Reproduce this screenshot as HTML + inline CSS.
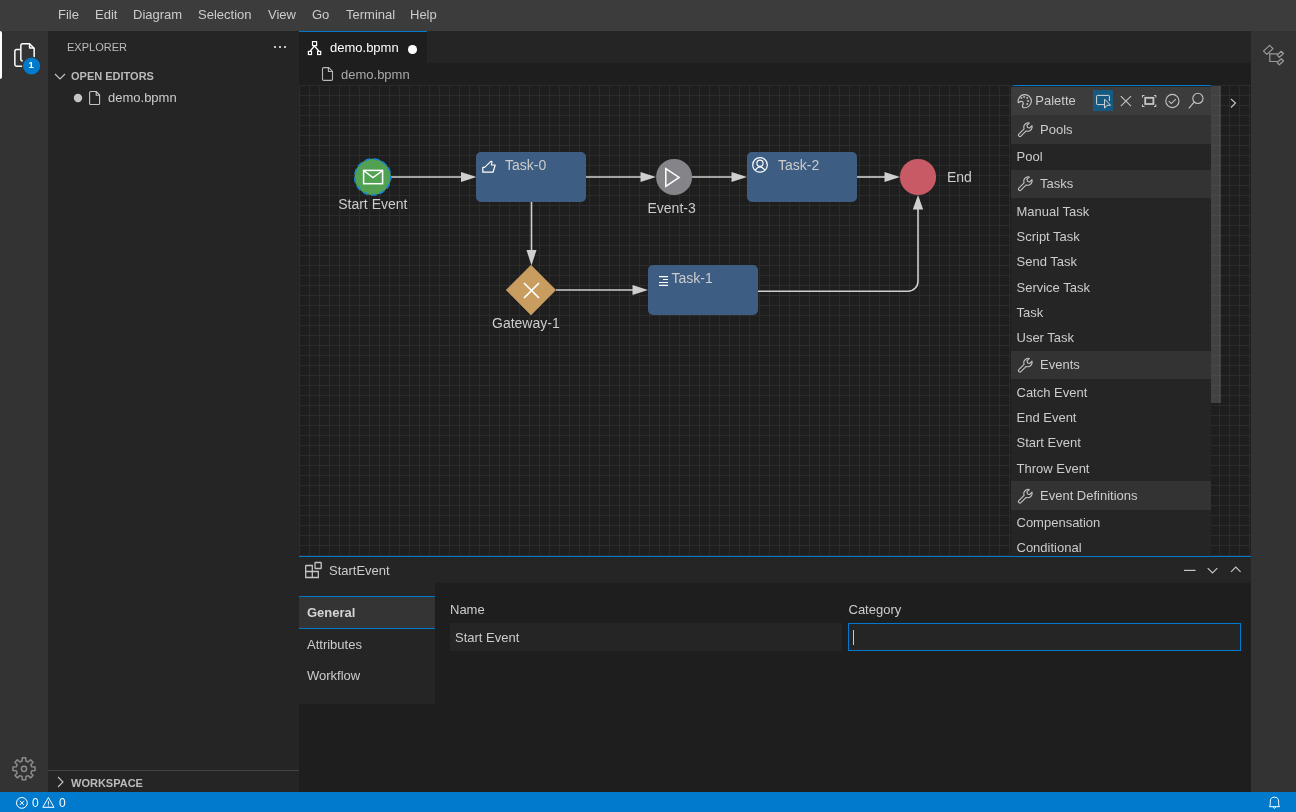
<!DOCTYPE html>
<html><head><meta charset="utf-8">
<style>
*{margin:0;padding:0;box-sizing:border-box}
html,body{-webkit-font-smoothing:antialiased;width:1296px;height:812px;overflow:hidden;background:#1e1e1e;font-family:"Liberation Sans",sans-serif;color:#cccccc}
.a{position:absolute}
.t{position:absolute;line-height:1;white-space:nowrap}
svg{position:absolute;overflow:visible}
#root{position:absolute;left:0;top:0;width:1296px;height:812px;will-change:transform}
</style></head><body><div id="root">
<!-- menubar -->
<div class="a" style="left:0;top:0;width:1296px;height:31px;background:#3c3c3c"></div>
<div class="t" style="left:58px;top:8px;font-size:13px;color:#cccccc">File</div>
<div class="t" style="left:95px;top:8px;font-size:13px;color:#cccccc">Edit</div>
<div class="t" style="left:133px;top:8px;font-size:13px;color:#cccccc">Diagram</div>
<div class="t" style="left:198px;top:8px;font-size:13px;color:#cccccc">Selection</div>
<div class="t" style="left:268px;top:8px;font-size:13px;color:#cccccc">View</div>
<div class="t" style="left:312px;top:8px;font-size:13px;color:#cccccc">Go</div>
<div class="t" style="left:346px;top:8px;font-size:13px;color:#cccccc">Terminal</div>
<div class="t" style="left:410px;top:8px;font-size:13px;color:#cccccc">Help</div>

<!-- activity bar -->
<div class="a" style="left:0;top:31px;width:48px;height:761px;background:#333333"></div>
<div class="a" style="left:0;top:31px;width:2px;height:48px;background:#ffffff;border-radius:0 2px 2px 0"></div>

<!-- sidebar -->
<div class="a" style="left:48px;top:31px;width:251px;height:761px;background:#252526"></div>
<div class="t" style="left:67px;top:42px;font-size:11px;color:#bbbbbb">EXPLORER</div>
<div class="t" style="left:71px;top:71px;font-size:11px;font-weight:bold;color:#bbbbbb">OPEN EDITORS</div>
<div class="t" style="left:108px;top:91px;font-size:13px;color:#cccccc">demo.bpmn</div>
<div class="a" style="left:48px;top:770px;width:251px;height:1px;background:#444444"></div>
<div class="t" style="left:71px;top:777.5px;font-size:11px;font-weight:bold;color:#bbbbbb">WORKSPACE</div>

<!-- editor tabs -->
<div class="a" style="left:299px;top:31px;width:952px;height:32px;background:#252526"></div>
<div class="a" style="left:299px;top:31px;width:128px;height:32px;background:#1e1e1e;border-top:1px solid #007acc"></div>
<div class="t" style="left:330px;top:41px;font-size:13px;color:#ffffff">demo.bpmn</div>
<div class="a" style="left:408.4px;top:45px;width:8.6px;height:8.6px;border-radius:50%;background:#ffffff"></div>
<div class="t" style="left:341px;top:68px;font-size:13px;color:#a9a9a9">demo.bpmn</div>

<!-- canvas -->
<div class="a" style="left:299px;top:85px;width:952px;height:471px;background-color:#1e1e1e;background-image:linear-gradient(to right,#2b2b2b 1px,transparent 1px),linear-gradient(to bottom,#2b2b2b 1px,transparent 1px);background-size:10px 10px"></div>

<!-- panel -->
<div class="a" style="left:299px;top:556px;width:952px;height:1px;background:#007acc"></div>
<div class="a" style="left:299px;top:557px;width:952px;height:26px;background:#252526"></div>
<div class="t" style="left:329px;top:564px;font-size:13px;color:#cccccc">StartEvent</div>
<div class="a" style="left:299px;top:583px;width:136px;height:121px;background:#252526"></div>
<div class="a" style="left:299px;top:596px;width:136px;height:33px;background:#343434;border-top:1px solid #007acc;border-bottom:1px solid #007acc"></div>
<div class="t" style="left:307px;top:606px;font-size:13px;font-weight:bold;color:#d4d4d4">General</div>
<div class="t" style="left:307px;top:638px;font-size:13px;color:#cccccc">Attributes</div>
<div class="t" style="left:307px;top:669px;font-size:13px;color:#cccccc">Workflow</div>
<div class="t" style="left:450px;top:603px;font-size:13px;color:#cccccc">Name</div>
<div class="a" style="left:450px;top:623px;width:392px;height:28px;background:#252526"></div>
<div class="t" style="left:455px;top:631px;font-size:13px;color:#cccccc">Start Event</div>
<div class="t" style="left:848.5px;top:603px;font-size:13px;color:#cccccc">Category</div>
<div class="a" style="left:848px;top:623px;width:393px;height:28px;background:#252526;border:1px solid #007acc"></div>
<div class="a" style="left:853px;top:630px;width:1px;height:15px;background:#cccccc"></div>

<!-- right bar -->
<div class="a" style="left:1251px;top:31px;width:45px;height:761px;background:#333333"></div>

<!-- status bar -->
<div class="a" style="left:0;top:792px;width:1296px;height:20px;background:#007acc"></div>
<div class="t" style="left:32px;top:797px;font-size:12px;color:#ffffff">0</div>
<div class="t" style="left:59px;top:797px;font-size:12px;color:#ffffff">0</div>

<svg width="1296" height="812" style="left:0;top:0" viewBox="0 0 1296 812">
<g fill="none" stroke="#cfcfcf" stroke-width="1.6">
<path d="M391,177 H462"/><path d="M586,177 H641"/><path d="M692,177 H732"/><path d="M857,177 H885"/>
<path d="M531.5,202 V251"/><path d="M556,290 H633"/>
<path d="M758,291.2 H908 A10,10 0 0 0 918,281.2 V209"/>
</g>
<g fill="#cfcfcf">
<path d="M461,172 L476.5,177 L461,182 Z"/>
<path d="M640.5,172 L656,177 L640.5,182 Z"/>
<path d="M731.5,172 L747,177 L731.5,182 Z"/>
<path d="M884.5,172 L900,177 L884.5,182 Z"/>
<path d="M526.5,250 L531.5,265.5 L536.5,250 Z"/>
<path d="M632.5,285 L648,290 L632.5,295 Z"/>
<path d="M912.8,209.5 L918,195 L923.2,209.5 Z"/>
</g>
<!-- start event -->
<circle cx="372.7" cy="177" r="18.2" fill="#52a152"/>
<circle cx="372.7" cy="177" r="18" fill="none" stroke="#1784d4" stroke-width="1.7" stroke-dasharray="5.6 3.1" stroke-dashoffset="2"/>
<g fill="none" stroke="#ffffff" stroke-width="1.5">
<rect x="363.6" y="170.4" width="19" height="13.3"/>
<path d="M364.2,171 L373,177.6 L382,171"/>
</g>
<text x="338.2" y="208.8" font-size="14" fill="#cccccc">Start Event</text>
<!-- task0 -->
<rect x="476" y="152" width="110" height="50" rx="5" fill="#3d5d82"/>
<path d="M482.8,172.2 V167.4 H484.6 L490.6,161.6 Q491.8,160.8 492,162 L491.4,165 H495.2 L493,172.2 Z" fill="none" stroke="#ffffff" stroke-width="1.2" stroke-linejoin="round"/>
<text x="505" y="170" font-size="14" fill="#cccccc">Task-0</text>
<!-- event3 -->
<circle cx="674.1" cy="177" r="18" fill="#858589"/>
<path d="M665.8,168.7 L679.1,177.4 L665.8,186.3 Z" fill="none" stroke="#ffffff" stroke-width="1.5" stroke-linejoin="miter"/>
<text x="647.5" y="212.8" font-size="14" fill="#cccccc">Event-3</text>
<!-- task2 -->
<rect x="747" y="152" width="110" height="50" rx="5" fill="#3d5d82"/>
<g fill="none" stroke="#ffffff" stroke-width="1.2">
<circle cx="760" cy="164.9" r="7.3"/>
<circle cx="760" cy="163.3" r="3.1"/>
<path d="M755.1,170.2 Q760,163.6 764.9,170.2"/>
</g>
<text x="778" y="170" font-size="14" fill="#cccccc">Task-2</text>
<!-- end -->
<circle cx="918" cy="177" r="18.1" fill="#c75a64"/>
<text x="947" y="182" font-size="14" fill="#cccccc">End</text>
<!-- gateway -->
<path d="M531,265.2 L555.7,290 L531,315 L506.2,290 Z" fill="#c99d60" stroke="#c99d60" stroke-width="0.6" stroke-linejoin="round"/>
<path d="M524,283 L539,298 M539,283 L524,298" stroke="#ffffff" stroke-width="1.7"/>
<text x="492" y="327.7" font-size="14" fill="#cccccc">Gateway-1</text>
<!-- task1 -->
<rect x="648" y="265" width="110" height="50" rx="5" fill="#3d5d82"/>
<path d="M659,276.6 H668.1 M662.9,279.5 H668.1 M659,282.5 H668.1 M659,285.4 H668.1" stroke="#ffffff" stroke-width="1.2"/>
<text x="671.5" y="283" font-size="14" fill="#cccccc">Task-1</text>
</svg>

<!-- palette -->
<div class="a" style="left:1011px;top:85px;width:200px;height:471px;overflow:hidden;border-top-left-radius:4px;background:#252526">
<div class="a" style="left:0;top:0;width:200px;height:1.3px;background:#007acc"></div>
<div class="a" style="left:0;top:1.5px;width:200px;height:28px;background:#3c3c3c"></div>
<div class="a" style="left:82px;top:5px;width:20px;height:21px;background:#165a82"></div>
<div class="t" style="left:24.3px;top:9px;font-size:13px;color:#cccccc">Palette</div>
<div class="a" style="left:0;top:30px;width:200px;height:29px;background:#333333"></div>
<div class="t" style="left:29px;top:38px;font-size:13px;color:#cccccc">Pools</div>
<div class="t" style="left:5.5px;top:65px;font-size:13px;color:#cccccc">Pool</div>
<div class="a" style="left:0;top:85px;width:200px;height:27.6px;background:#333333"></div>
<div class="t" style="left:29px;top:92px;font-size:13px;color:#cccccc">Tasks</div>
<div class="t" style="left:5.5px;top:120px;font-size:13px;color:#cccccc">Manual Task</div>
<div class="t" style="left:5.5px;top:145px;font-size:13px;color:#cccccc">Script Task</div>
<div class="t" style="left:5.5px;top:170px;font-size:13px;color:#cccccc">Send Task</div>
<div class="t" style="left:5.5px;top:196px;font-size:13px;color:#cccccc">Service Task</div>
<div class="t" style="left:5.5px;top:221px;font-size:13px;color:#cccccc">Task</div>
<div class="t" style="left:5.5px;top:246px;font-size:13px;color:#cccccc">User Task</div>
<div class="a" style="left:0;top:265.7px;width:200px;height:28.3px;background:#333333"></div>
<div class="t" style="left:29px;top:273px;font-size:13px;color:#cccccc">Events</div>
<div class="t" style="left:5.5px;top:301px;font-size:13px;color:#cccccc">Catch Event</div>
<div class="t" style="left:5.5px;top:326px;font-size:13px;color:#cccccc">End Event</div>
<div class="t" style="left:5.5px;top:351px;font-size:13px;color:#cccccc">Start Event</div>
<div class="t" style="left:5.5px;top:377px;font-size:13px;color:#cccccc">Throw Event</div>
<div class="a" style="left:0;top:395.7px;width:200px;height:29.3px;background:#333333"></div>
<div class="t" style="left:29px;top:404px;font-size:13px;color:#cccccc">Event Definitions</div>
<div class="t" style="left:5.5px;top:431px;font-size:13px;color:#cccccc">Compensation</div>
<div class="t" style="left:5.5px;top:456px;font-size:13px;color:#cccccc">Conditional</div>
</div>
<div class="a" style="left:1211px;top:86px;width:10px;height:317px;background:rgba(121,121,121,0.4)"></div>

<svg width="1296" height="812" style="left:0;top:0" viewBox="0 0 1296 812">
<!-- files icon -->
<g fill="none" stroke="#ffffff" stroke-width="1.5" stroke-linejoin="round">
<path d="M20.6,49.6 H16.6 Q14.85,49.6 14.85,51.4 V64.6 Q14.85,66.2 16.6,66.2 H27"/>
<path d="M22.8,61 Q20.85,61 20.85,59 V45.6 Q20.85,43.7 22.8,43.7 H29.6 L34.15,48.2 V58"/>
<path d="M29.6,43.9 V48 H34"/>
</g>
<circle cx="31.6" cy="66" r="9.6" fill="#333333"/>
<circle cx="31.6" cy="66" r="8.6" fill="#007acc"/>
<text x="28.6" y="67.8" font-size="9.5" font-weight="bold" fill="#ffffff">1</text>
<!-- gear -->
<path d="M22.06,761.04 L22.25,757.74 L25.75,757.74 L25.94,761.04 L28.12,761.94 L30.58,759.74 L33.06,762.22 L30.86,764.68 L31.76,766.86 L35.06,767.05 L35.06,770.55 L31.76,770.74 L30.86,772.92 L33.06,775.38 L30.58,777.86 L28.12,775.66 L25.94,776.56 L25.75,779.86 L22.25,779.86 L22.06,776.56 L19.88,775.66 L17.42,777.86 L14.94,775.38 L17.14,772.92 L16.24,770.74 L12.94,770.55 L12.94,767.05 L16.24,766.86 L17.14,764.68 L14.94,762.22 L17.42,759.74 L19.88,761.94 Z" fill="none" stroke="#8b8b8b" stroke-width="1.5" stroke-linejoin="round"/>
<circle cx="24" cy="768.8" r="2.6" fill="none" stroke="#8b8b8b" stroke-width="1.5"/>
<!-- sidebar -->
<g fill="#c5c5c5"><rect x="274" y="46" width="2" height="2"/><rect x="279" y="46" width="2" height="2"/><rect x="284" y="46" width="2" height="2"/></g>
<path d="M55,74 L60,79 L65,74" fill="none" stroke="#c5c5c5" stroke-width="1.1"/>
<circle cx="78" cy="98" r="4.2" fill="#c5c5c5"/>
<path d="M89.6,92.5 Q89.6,91.5 90.6,91.5 H96.2 L99.6,95 V103.5 Q99.6,104.5 98.6,104.5 H90.6 Q89.6,104.5 89.6,103.5 Z M96.2,91.5 V95.2 H99.6" fill="none" stroke="#c5c5c5" stroke-width="1.1" stroke-linejoin="round"/>
<path d="M58,777 L63,782 L58,787" fill="none" stroke="#c5c5c5" stroke-width="1.1"/>
<!-- tab icon -->
<g fill="none" stroke="#ffffff" stroke-width="1.2">
<rect x="312.5" y="41.6" width="4.1" height="4"/>
<rect x="308.4" y="51.4" width="3.1" height="3.1"/>
<rect x="317.6" y="51.4" width="3.1" height="3.1"/>
<path d="M314.5,46 L310.2,51 M314.5,46 L318.8,51"/>
</g>
<!-- breadcrumb file -->
<path d="M322.5,68.8 Q322.5,67.6 323.7,67.6 H328.8 L332.5,71.3 V79.2 Q332.5,80.4 331.3,80.4 H323.7 Q322.5,80.4 322.5,79.2 Z M328.4,67.6 V71.5 H332.5" fill="none" stroke="#b8b8b8" stroke-width="1.1" stroke-linejoin="round"/>
<!-- right bar icon -->
<g fill="none" stroke="#9a9a9a" stroke-width="1.2" stroke-linejoin="round">
<path d="M1269.6,45.4 L1273,48.6 L1266.9,54.4 L1263.5,51.1 Z"/>
<path d="M1281.25,51.3 L1283.5,53.5 L1279.3,57.3 L1277.2,55 Z"/>
<path d="M1281.25,58.8 L1283.5,61 L1279.3,64.8 L1277.2,62.5 Z"/>
<path d="M1269.8,53 V61.5 H1277.6 M1269.8,53.8 H1277.6"/>
</g>
<!-- palette icons -->
<g fill="none" stroke="#c5c5c5" stroke-width="1.2" stroke-linejoin="round" stroke-linecap="round">
<path d="M1018.3,102.6 A6.6,6.6 0 1 1 1023.4,107.6 C1022.2,107.2 1022.2,105.8 1023,104.4 C1023.8,102.8 1022.6,101 1020.9,101.3 C1019.8,101.5 1019.2,102.8 1018.3,102.6 Z"/>
</g>
<g fill="#c5c5c5">
<circle cx="1021.3" cy="97.9" r="0.95"/><circle cx="1024.1" cy="96.9" r="0.95"/><circle cx="1027.2" cy="97.9" r="0.95"/><circle cx="1028.1" cy="101" r="0.95"/><circle cx="1027.2" cy="104" r="0.95"/>
</g>
<defs>
<g id="wr" fill="none" stroke="#c5c5c5" stroke-width="1.1" stroke-linejoin="round">
<path d="M1.3,12.6 L6.6,7.3 C5.9,5.2 6.6,3 8.5,1.9 C9.6,1.3 10.8,1.2 11.8,1.5 L9.4,3.9 L10.1,5.9 L12.1,6.6 L14.5,4.2 C14.8,5.4 14.6,6.6 14,7.6 C12.9,9.4 10.7,10.1 8.7,9.4 L3.4,14.7 C2.9,15.2 2.1,15.2 1.5,14.7 L1.3,14.5 C0.8,14 0.8,13.1 1.3,12.6 Z"/>
</g>
</defs>
<use href="#wr" x="1017.5" y="121.5"/>
<use href="#wr" x="1017.5" y="175.5"/>
<use href="#wr" x="1017.5" y="357"/>
<use href="#wr" x="1017.5" y="488"/>
<g fill="none" stroke="#d8d8d8" stroke-width="1" stroke-linejoin="round">
<path d="M1104,104.6 H1097.4 Q1096.6,104.6 1096.6,103.8 V96.2 Q1096.6,95.4 1097.4,95.4 H1108.6 Q1109.4,95.4 1109.4,96.2 V101"/>
<path d="M1104.6,99.2 L1104.6,108.2 L1106.8,105.4 L1110.6,105.2 Z"/>
</g>
<g fill="none" stroke="#c5c5c5" stroke-width="1.1">
<path d="M1120.8,96.2 L1131,106.2 M1131,96.2 L1120.8,106.2"/>
<path d="M1142.5,97.5 V95.5 H1144.5 M1154,95.5 H1155.8 V97.5 M1155.8,104.5 V106.5 H1154 M1144.5,106.5 H1142.5 V104.5"/>
<rect x="1145.2" y="97.8" width="8.2" height="6.2" stroke-width="1.8"/>
<circle cx="1172.4" cy="101" r="6.6"/>
<path d="M1168.8,101.2 L1171.3,103.6 L1175.8,99.1"/>
<circle cx="1197.9" cy="98.4" r="5.1"/>
<path d="M1194.2,102.2 L1188.8,108.4"/>
<path d="M1231,99 L1235.5,103 L1231,107.5" stroke="#c5c5c5"/>
</g>
<!-- panel header icon -->
<g fill="none" stroke="#c5c5c5" stroke-width="1.3">
<rect x="315" y="562.5" width="6.2" height="6" rx="0.6"/>
<path d="M305.7,577.5 V566 Q305.7,565.5 306.2,565.5 H312.3 V577.5 Z M305.7,571.5 H318.3 V577.5 H305.7"/>
</g>
<g fill="none" stroke="#c5c5c5" stroke-width="1.2">
<path d="M1184,570.4 H1195.6"/>
<path d="M1207.7,568.1 L1212.5,572.9 L1217.3,568.1"/>
<path d="M1231,571.8 L1235.8,567 L1240.6,571.8"/>
</g>
<!-- status -->
<g fill="none" stroke="#ffffff" stroke-width="1">
<circle cx="21.9" cy="802.9" r="5.4"/>
<path d="M19.8,800.8 L24,805 M24,800.8 L19.8,805"/>
<path d="M48.4,797.5 L54,807.3 H42.8 Z" stroke-linejoin="round"/>
<path d="M48.4,801.2 V804.6 M48.4,805.5 V806.4"/>
<path d="M1269.4,806.7 Q1270.3,805.6 1270.3,803.4 V801.4 Q1270.3,797.2 1274.45,797.2 Q1278.6,797.2 1278.6,801.4 V803.4 Q1278.6,805.6 1279.5,806.7 Z M1273.1,807.3 Q1274.45,809.4 1275.8,807.3"/>
</g>
</svg>

</div></body></html>
